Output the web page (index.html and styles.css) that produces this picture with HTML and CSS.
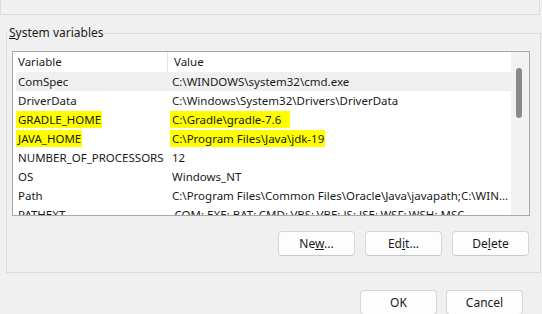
FILE: index.html
```html
<!DOCTYPE html>
<html lang="en">
<head>
    <meta charset="UTF-8">
    <title>Environment Variables</title>
    <link rel="stylesheet" href="styles.css">
</head>
<body>
    <div class="dialog">
        <div class="top-panel"></div>

        <div class="group">
            <span class="group-label"><u>S</u>ystem variables</span>

            <div class="listbox">
                <div class="list-body">
                    <div class="list-header">
                        <div class="head-cell first">Variable</div>
                        <div class="head-cell">Value</div>
                    </div>
                    <div class="row selected">
                        <div class="cell">ComSpec</div>
                        <div class="cell">C:\WINDOWS\system32\cmd.exe</div>
                    </div>
                    <div class="row">
                        <div class="cell">DriverData</div>
                        <div class="cell">C:\Windows\System32\Drivers\DriverData</div>
                    </div>
                    <div class="row">
                        <div class="cell"><span class="hl hl-gradle">GRADLE_HOME</span></div>
                        <div class="cell"><span class="hl hl-gradle-val">C:\Gradle\gradle-7.6</span></div>
                    </div>
                    <div class="row">
                        <div class="cell"><span class="hl hl-java">JAVA_HOME</span></div>
                        <div class="cell"><span class="hl hl-java-val">C:\Program Files\Java\jdk-19</span></div>
                    </div>
                    <div class="row">
                        <div class="cell">NUMBER_OF_PROCESSORS</div>
                        <div class="cell">12</div>
                    </div>
                    <div class="row">
                        <div class="cell">OS</div>
                        <div class="cell">Windows_NT</div>
                    </div>
                    <div class="row">
                        <div class="cell">Path</div>
                        <div class="cell">C:\Program Files\Common Files\Oracle\Java\javapath;C:\WIN...</div>
                    </div>
                    <div class="row">
                        <div class="cell">PATHEXT</div>
                        <div class="cell">.COM;.EXE;.BAT;.CMD;.VBS;.VBE;.JS;.JSE;.WSF;.WSH;.MSC</div>
                    </div>
                </div>
                <div class="scrollbar">
                    <div class="thumb"></div>
                </div>
            </div>

            <div class="button-row">
                <button class="btn">Ne<u>w</u>...</button>
                <button class="btn">Ed<u>i</u>t...</button>
                <button class="btn">De<u>l</u>ete</button>
            </div>
        </div>

        <div class="dialog-buttons">
            <button class="btn">OK</button>
            <button class="btn">Cancel</button>
        </div>
    </div>
</body>
</html>
```

FILE: styles.css
```css
body, html {
    margin: 0;
    padding: 0;
    width: 542px;
    height: 314px;
    overflow: hidden;
    background-color: #f0f0f0;
    font-family: "Noto Sans", "Open Sans", sans-serif;
    font-size: 11.5px;
    color: #1a1a1a;
}
.dialog {
    display: flex;
    flex-direction: column;
}
.top-panel {
    width: 538px;
    height: 14px;
    border: 1px solid #dcdcdc;
    border-top: none;
}
.group {
    position: relative;
    margin: 18px 0 0 6px;
    width: 518px;
    padding: 17px 10px 16px 5px;
    border: 1px solid #dcdcdc;
}
.group-label {
    position: absolute;
    top: -9px;
    left: 1px;
    padding: 0 1px;
    background-color: #f0f0f0;
    line-height: 16px;
    font-size: 12px;
}
.listbox {
    display: flex;
    height: 163px;
    border: 1px solid #a8a8a8;
    background-color: #ffffff;
    overflow: hidden;
}
.list-body {
    flex-grow: 1;
    padding-left: 3px;
    overflow: hidden;
}
.list-header {
    display: flex;
    height: 20px;
    align-items: center;
}
.head-cell {
    padding-left: 2px;
    line-height: 20px;
}
.head-cell.first {
    width: 149px;
    border-right: 1px solid #e5e5e5;
    margin-right: 4px;
}
.row {
    display: grid;
    grid-template-columns: 154px 1fr;
    height: 19px;
    align-items: center;
}
.row.selected {
    background-color: #f0f0f0;
}
.cell {
    padding-left: 2px;
    white-space: nowrap;
    overflow: hidden;
    line-height: 19px;
}
/* yellow marker strokes from the screenshot */
.hl {
    background-color: #ffff00;
    padding: 1px 1px 1px 2px;
}
.hl-gradle {
    margin-left: -5px;
    padding-left: 5px;
}
.hl-java {
    margin-left: -2px;
}
.hl-gradle-val {
    margin-left: -3px;
    padding-left: 3px;
    padding-right: 9px;
}
.hl-java-val {
    margin-left: -2px;
}
.scrollbar {
    width: 18px;
    background-color: #f2f2f2;
}
.thumb {
    width: 6px;
    height: 50px;
    margin: 16px 0 0 5px;
    border-radius: 3px;
    background-color: #8a8a8a;
}
.button-row {
    display: flex;
    justify-content: flex-end;
    gap: 10px;
    margin-top: 15px;
    padding-right: 1px;
}
.btn {
    width: 77px;
    height: 25px;
    padding: 0;
    font-family: inherit;
    font-size: 12px;
    color: #1a1a1a;
    background-color: #fdfdfd;
    border: 1px solid #d6d6d6;
    border-bottom-color: #c8c8c8;
    border-radius: 4px;
}
.dialog-buttons {
    display: flex;
    justify-content: flex-end;
    gap: 9px;
    margin-top: 17px;
    padding-right: 19px;
}
```
